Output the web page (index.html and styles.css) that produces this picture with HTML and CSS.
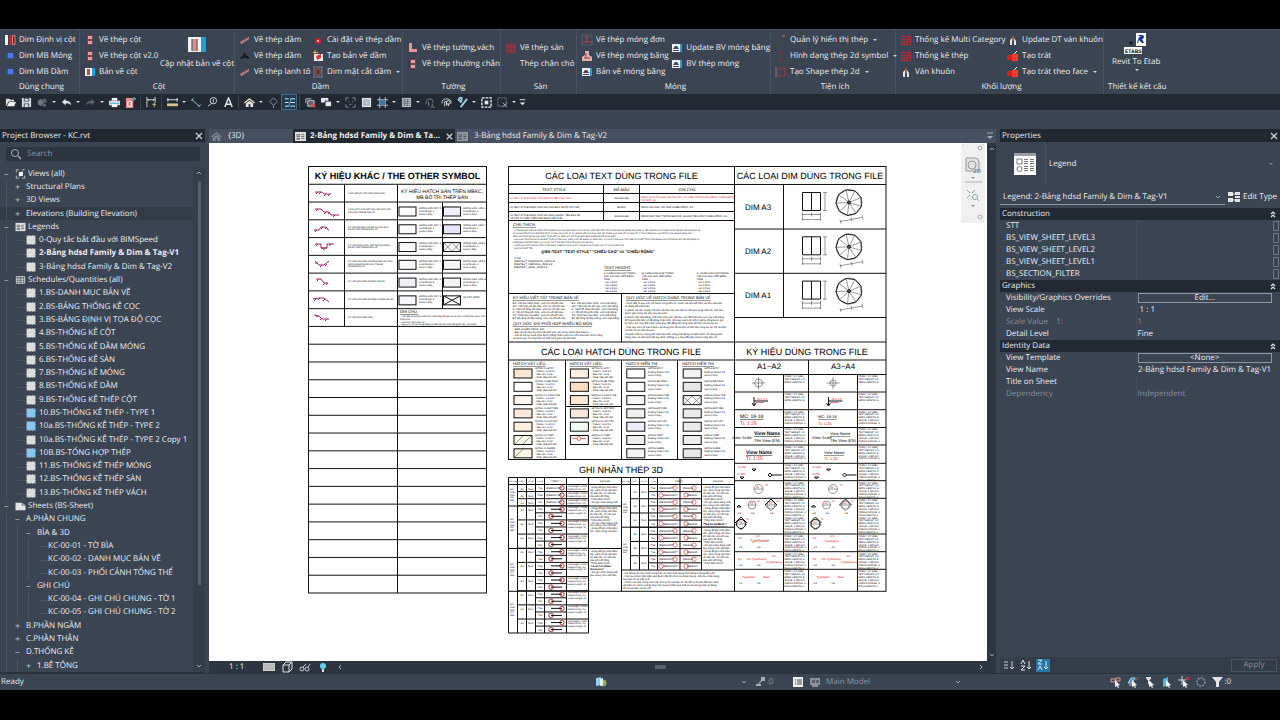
FILE: index.html
```html
<!DOCTYPE html>
<html lang="vi">
<head>
<meta charset="UTF-8">
<meta name="viewport" content="width=device-width, initial-scale=1.0">
<title>KC.rvt</title>
<link rel="stylesheet" href="styles.css">
</head>
<body>

<!-- icon sprite -->
<svg class="sprite" aria-hidden="true">
  <symbol id="i-axis" viewBox="0 0 12 12"><path d="M1 1h3v10H1z" fill="#eee"/><path d="M5.500 1h2v10h-2z" fill="#b33"/><path d="M8.500 1.500h2.500v9H8.500z" fill="#433" stroke="#e77"/></symbol>
  <symbol id="i-blue" viewBox="0 0 12 12"><path d="M2 3h8v6H2z" fill="#2b5599"/><path d="M4 3h5v5H4z" fill="#4a7be0"/></symbol>
  <symbol id="i-col" viewBox="0 0 12 12"><path d="M3 1h6v10H3z" fill="#6b4650"/><path d="M4 2h4v3H4zM4 7h4v3H4z" fill="#e8a0a0"/></symbol>
  <symbol id="i-sheet" viewBox="0 0 12 12"><path d="M1 2h7v8H1z" fill="#eee"/><path d="M3 3h3v6H3z" fill="#a55"/><path d="M8 2h3v8H8z" fill="#1ba1e2"/></symbol>
  <symbol id="i-bigcol" viewBox="0 0 18 18"><path d="M0 1h13v15H0z" fill="#f4f4f4"/><path d="M4 3v12M9 3v12M4 4h5M4 6h5M4 8h5M4 10h5M4 12h5M4 14h5" stroke="#844" stroke-width="1.200"/><path d="M13 1h5v15h-5z" fill="#1ba1e2"/></symbol>
  <symbol id="i-beam" viewBox="0 0 12 12"><path d="M1 8l9-5v2L2 10z" fill="#e8a0a0"/><path d="M1 9l9-5" stroke="#824" stroke-width=".600"/></symbol>
  <symbol id="i-dark" viewBox="0 0 12 12"><path d="M5 2l2 3 4 3-3 1-2-2-3 2-2-1 3-2z" fill="#15181d"/></symbol>
  <symbol id="i-gear" viewBox="0 0 12 12"><circle cx="6" cy="7" r="3" fill="#c22"/><circle cx="6" cy="7" r="1" fill="#fcc"/></symbol>
  <symbol id="i-new" viewBox="0 0 12 12"><path d="M2 4h9v7H2z" fill="#eee"/><path d="M4 6l5-2v4l-4 2z" fill="#d33"/><path d="M3 0v5M1 2.500h5" stroke="#f8b04a"/></symbol>
  <symbol id="i-section" viewBox="0 0 12 12"><path d="M1 1h10M1 11h10M2 1v10M10 1v10" stroke="#777f8c" fill="none"/><path d="M4 3h4v6H4z" fill="#533" stroke="#c55" stroke-width=".800"/></symbol>
  <symbol id="i-ell" viewBox="0 0 12 12"><path d="M2 1h3v6h5v3H2z" fill="#e89a98"/></symbol>
  <symbol id="i-grid" viewBox="0 0 12 12"><path d="M1 3h10M1 5h10M1 8h10M1 10h10M3 1v10M6 1v10M9 1v10" stroke="#a8323a"/></symbol>
  <symbol id="i-foot" viewBox="0 0 12 12"><path d="M1 1h10v10H1z" fill="none" stroke="#565f6e"/><path d="M2 8h8M6 3v5M4 3h4" stroke="#c0454a"/></symbol>
  <symbol id="i-ribft" viewBox="0 0 12 12"><path d="M4 1h4v4l3 2v4H1V7l3-2z" fill="#e8b0ac"/><path d="M3 8h6M5 3v5" stroke="#844"/></symbol>
  <symbol id="i-bv" viewBox="0 0 12 12"><path d="M1 2h8v8H1z" fill="#eee"/><path d="M2 7l2-3h2l2 3z" fill="#445"/><path d="M2 8.500h6" stroke="#445"/><path d="M9 2h2v8H9z" fill="#1ba1e2"/></symbol>
  <symbol id="i-pen" viewBox="0 0 12 12"><path d="M3 10l5-8" stroke="#5a4040"/><path d="M7 2h3" stroke="#c77"/></symbol>
  <symbol id="i-shape" viewBox="0 0 12 12"><path d="M6 1v3M6 5v2M6 8v3M4 2h4M4 10h4" stroke="#8a323a"/></symbol>
  <symbol id="i-stir" viewBox="0 0 12 12"><path d="M1 1v10" stroke="#7c8491"/><path d="M3 3h7v7H3zM4 1v2M9 1v2" fill="none" stroke="#a8323a"/></symbol>
  <symbol id="i-cal" viewBox="0 0 12 12"><path d="M1.500 2.500h9v8h-9zM1 5h10M4 5v5M7 5v5M1 8h10M3 1v2M9 1v2" fill="none" stroke="#b82a2a"/></symbol>
  <symbol id="i-form" viewBox="0 0 12 12"><path d="M6 1l2 6H4z" fill="#a56a43"/><path d="M3 6l2-2v7H3zM7 4l2 3v4H7z" fill="#e8e8e8"/></symbol>
  <symbol id="i-paint" viewBox="0 0 12 12"><path d="M0 5h6v5H0z" fill="#d32020"/><path d="M5 4h6v7H5z" fill="#ff3b28"/><path d="M7 4l3-3" stroke="#fff"/></symbol>
  <symbol id="i-etab" viewBox="0 0 24 22"><path d="M12 0h10v13H12z" fill="#fff"/><path d="M14 2h4q2 0 2 2t-2 2l2 4h-2l-3-3-1 3h-1l2-6h2z" fill="#10349c"/><circle cx="7" cy="10" r="1.500" fill="#111"/><path d="M0 14h18v7H0z" fill="#fff"/></symbol>

  <symbol id="q-open" viewBox="0 0 12 12"><path d="M1 10V2h4l1 1h4v2H4z" fill="#d9dce1"/><path d="M4.500 5.500H12L10 10H2z" fill="#f1f1f1"/></symbol>
  <symbol id="q-save" viewBox="0 0 12 12"><path d="M1 1h10v10H1z" fill="#d9dce1"/><path d="M3 1h6v4H3zM3 7h6v4H3z" fill="#39414d"/><path d="M4 8h4v3H4zM4 2h4v2H4z" fill="#d9dce1"/></symbol>
  <symbol id="q-sync" viewBox="0 0 12 12"><path d="M1 4l3-2 3 2v4l-3 2-3-2z" fill="#6b7380"/><circle cx="8" cy="4" r="2.500" fill="#596170"/><circle cx="8" cy="9" r="2" fill="#596170"/></symbol>
  <symbol id="q-undo" viewBox="0 0 12 12"><path d="M5 2L1 5.500 5 9V7q4-1 6 2 0-5-6-5z" fill="#e8e8e8"/></symbol>
  <symbol id="q-redo" viewBox="0 0 12 12"><path d="M7 2l4 3.500L7 9V7Q3 6 1 9q0-5 6-5z" fill="#596170"/></symbol>
  <symbol id="q-print" viewBox="0 0 12 12"><path d="M3 1h6v3H3z" fill="#fff"/><path d="M0 4h12v5H0z" fill="#d4d8dd"/><path d="M3 8h6v3H3z" fill="#fff"/><path d="M1 7h10" stroke="#3cb7ea"/></symbol>
  <symbol id="q-pdf" viewBox="0 0 12 12"><path d="M1 1h8v11H1z" fill="#e98a8a"/><path d="M3 5h4v5H3z" fill="none" stroke="#fff"/><path d="M7 2h4M9 0l3 2-3 2" stroke="#4ab8ea" fill="none"/></symbol>
  <symbol id="q-dim" viewBox="0 0 12 12"><path d="M1 0v11M10 0v6M1 3h9M3 2v2M8 2v2" stroke="#d9dce1" fill="none"/><path d="M9 6v5M7 8h4" stroke="#e8c05a"/></symbol>
  <symbol id="q-meas" viewBox="0 0 12 12"><path d="M0 3h12M1 1v4M11 1v4" stroke="#e8e8e8"/><path d="M0 7h12v3H0z" fill="#d8c48c"/></symbol>
  <symbol id="q-align" viewBox="0 0 12 12"><path d="M1 3l8 7M0 4l3-3M8 11l3-3" stroke="#a9d3ec" fill="none"/></symbol>
  <symbol id="q-tag" viewBox="0 0 12 12"><circle cx="7" cy="4" r="3.500" fill="none" stroke="#d9dce1"/><path d="M7 2v4M5 7l-4 3" stroke="#d9dce1"/></symbol>
  <symbol id="q-text" viewBox="0 0 12 12"><path d="M2 11L6 1l4 10M3.500 8h5" fill="none" stroke="#e8e8e8" stroke-width="1.600"/></symbol>
  <symbol id="q-home" viewBox="0 0 12 12"><path d="M0 6l6-5 6 5-1 1-5-4-5 4zM2 7l4-3 4 3v4H7V8H5v3H2z" fill="#e3e0d4"/></symbol>
  <symbol id="q-ghome" viewBox="0 0 12 12"><path d="M0 6l6-5 6 5-1 1-5-4-5 4zM2 7l4-3 4 3v4H7V8H5v3H2z" fill="#7e8694"/></symbol>
  <symbol id="q-sect" viewBox="0 0 12 12"><path d="M6 1l4 4-4 4-4-4zM6 9v3" fill="none" stroke="#8b93a0"/></symbol>
  <symbol id="q-thin" viewBox="0 0 12 12"><path d="M1 2h4M1 6h4M1 10h4M7 2h5M7 6h5M7 10h5" stroke="#e8f4fb"/><path d="M8 1l-3 10" stroke="#4ab8ea"/></symbol>
  <symbol id="q-close" viewBox="0 0 12 12"><path d="M1 2h6M1 2v5M3 4h7v6H3z" fill="#59616e" stroke="#c9cdd3"/><path d="M7 7l4 4M11 7l-4 4" stroke="#e04848" stroke-width="1.500"/></symbol>
  <symbol id="q-win" viewBox="0 0 12 12"><path d="M0 1h8v5H0z" fill="#e8e8e8"/><path d="M4 4h8v7H4z" fill="#222933"/><path d="M5 5h6v5H5z" fill="#e8e8e8"/></symbol>
  <symbol id="q-mark" viewBox="0 0 12 12"><path d="M1 4V1h3M8 1h3v3M11 8v3H8M4 11H1V8M3 5h1M8 5h1M5 8h2" fill="none" stroke="#8b93a0"/></symbol>
  <symbol id="q-page" viewBox="0 0 12 12"><path d="M1 1h10v10H1z" fill="#dbe4ea"/><path d="M3 3h6v6H3z" fill="#b5c3cd" stroke="#788593" stroke-dasharray="1 1"/></symbol>
  <symbol id="q-crop" viewBox="0 0 12 12"><path d="M3 0v12M9 0v12M0 3h12M0 9h12" stroke="#c9cdd3"/><path d="M3 3h6v6H3z" fill="#3e76a3"/></symbol>
  <symbol id="q-hatch" viewBox="0 0 12 12"><path d="M1 1h10v10H1z" fill="#b8bcc2"/><path d="M2 3h8M2 5h8M2 7h8M2 9h8M4 2v8M7 2v8" stroke="#5a616c" stroke-width=".700"/></symbol>
  <symbol id="q-joina" viewBox="0 0 12 12"><path d="M1 8q0-6 4-6t4 4M4 10V5M8 7v3M6 11h5" fill="none" stroke="#7a828f"/></symbol>
  <symbol id="q-joinb" viewBox="0 0 12 12"><path d="M1 7q0-5 5-5t5 5M4 10V5h2v4M8 10V7" fill="none" stroke="#dfe2e6"/><circle cx="8" cy="6" r="2" fill="none" stroke="#dfe2e6"/></symbol>
  <symbol id="q-brush" viewBox="0 0 12 12"><path d="M1 2l4 4M2 1h3v3M4 11l7-9" stroke="#9fd0ea" stroke-width="2" fill="none"/></symbol>
  <symbol id="q-sel" viewBox="0 0 12 12"><path d="M1 1h10v10H1z" fill="none" stroke="#e8e8e8" stroke-dasharray="3 1" stroke-width="1.500"/><path d="M4 4h4v4H4z" fill="#e8e8e8"/></symbol>
  <symbol id="q-desel" viewBox="0 0 12 12"><path d="M1 1h9v9H1z" fill="none" stroke="#828a96" stroke-dasharray="2 1"/><path d="M6 6l5 5M11 6l-5 5" stroke="#a4abb6"/></symbol>
  <symbol id="q-more" viewBox="0 0 12 12"><path d="M3 3h6" stroke="#e8e8e8"/><path d="M3 6h6L6 9z" fill="#e8e8e8"/></symbol>

  <symbol id="p-views" viewBox="0 0 12 12"><path d="M1 4V1h3M8 1h3M1 8v3h3M8 11h3V8" fill="none" stroke="#cfd3d9"/><path d="M4 4l5-1v5l-5 1z" fill="#f1f1f1"/></symbol>
  <symbol id="p-legend" viewBox="0 0 12 12"><path d="M0 1h12v10H0z" fill="#dcdcdc"/><path d="M2 4h3v2H2zM2 8h3v1H2zM7 4h3M7 6h3M7 8h3" fill="none" stroke="#666"/></symbol>
  <symbol id="p-sched" viewBox="0 0 12 12"><path d="M1 2h10v8H1zM1 5h10M1 7.500h10M4 2v8M8 2v8" fill="none" stroke="#e4e4e4"/></symbol>
  <symbol id="p-sheet" viewBox="0 0 12 12"><path d="M0 2h8l4 3v6H0z" fill="#e4e4e4"/><path d="M8 2v3h4" fill="none" stroke="#555"/></symbol>
  <symbol id="p-search" viewBox="0 0 12 12"><circle cx="5" cy="5" r="3.500" fill="none" stroke="#aab0ba"/><path d="M8 8l3 3" stroke="#aab0ba" stroke-width="1.400"/></symbol>
  <symbol id="p-up" viewBox="0 0 12 12"><path d="M4 7l2-2 2 2" fill="none" stroke="#a4abb6"/></symbol>
  <symbol id="p-down" viewBox="0 0 12 12"><path d="M4 5l2 2 2-2" fill="none" stroke="#a4abb6"/></symbol>
  <symbol id="p-left" viewBox="0 0 12 12"><path d="M6 4L4 6l2 2" fill="none" stroke="#a4abb6"/></symbol>
  <symbol id="p-right" viewBox="0 0 12 12"><path d="M6 4l2 2-2 2" fill="none" stroke="#a4abb6"/></symbol>
  <symbol id="p-x" viewBox="0 0 12 12"><path d="M3 3l6 6M9 3l-6 6" stroke="#d4d7dc" stroke-width="1.200"/></symbol>
  <symbol id="p-big" viewBox="0 0 22 22"><path d="M0 0h22v3H0z" fill="#9a9da3"/><path d="M0 3h22v19H0z" fill="#fff"/><path d="M3 6h5v5H3zM10 6.500h4M10 8.500h4M10 10.500h4M16 6.500h4M16 8.500h4M16 10.500h4M10 13.500h4M10 15.500h4M10 17.500h4M16 13.500h4M16 15.500h4M16 17.500h4" fill="none" stroke="#777"/><circle cx="5.500" cy="16" r="2.500" fill="none" stroke="#777"/></symbol>
  <symbol id="p-edit" viewBox="0 0 12 12"><path d="M0 1h5v4H0zM0 7h5v4H0zM7 1h5v3H7zM7 5h5v2H7zM7 8h5v3H7z" fill="#e4e4e4"/><path d="M5 3h2M5 9h2" stroke="#e4e4e4"/></symbol>
  <symbol id="p-fold" viewBox="0 0 12 12"><path d="M4 6l2-2 2 2M4 9l2-2 2 2" fill="none" stroke="#e4e4e4" stroke-width="1.200"/></symbol>
  <symbol id="p-sort" viewBox="0 0 12 12"><path d="M1 3h4M1 6h4M1 9h4M9 2v8M7 8l2 2 2-2" fill="none" stroke="#c9cdd3"/></symbol>
  <symbol id="p-az" viewBox="0 0 12 12"><path d="M1 5l2-4 2 4M1 7h4L1 11h4M9 2v8M7 8l2 2 2-2" fill="none" stroke="#dfe5ea"/></symbol>
  <symbol id="p-za" viewBox="0 0 12 12"><path d="M1 1h4L1 5h4M1 11l2-4 2 4M9 2v8M7 8l2 2 2-2" fill="none" stroke="#dfe5ea"/></symbol>

  <symbol id="v-detail" viewBox="0 0 12 12"><path d="M0 2h12v8H0z" fill="#e0e0e0"/><path d="M0 4h12M0 6h12M0 8h12M2 2v8M4 2v8M6 2v8M8 2v8M10 2v8" stroke="#888" stroke-width=".500"/></symbol>
  <symbol id="v-cube" viewBox="0 0 12 12"><path d="M2 4h6v7H2zM2 4l3-3h6v7l-3 3M8 4l3-3" fill="none" stroke="#e4e4e4"/></symbol>
  <symbol id="v-crop" viewBox="0 0 12 12"><circle cx="3" cy="8" r="2" fill="none" stroke="#c9cdd3"/><circle cx="8" cy="8" r="2" fill="none" stroke="#c9cdd3"/><path d="M4 6l3-3M9 6l2-3" stroke="#c9cdd3"/></symbol>
  <symbol id="v-bulb" viewBox="0 0 12 12"><circle cx="6" cy="5" r="3" fill="#5fd4f0"/><path d="M5 8h2v3H5z" fill="#e4e4e4"/></symbol>
  <symbol id="s-globe" viewBox="0 0 12 12"><path d="M1 2l5-1v8l-5 1z" fill="#8fd3f0"/><circle cx="8" cy="7" r="3.500" fill="#7fb85a"/><path d="M5 3l3-1v7l-3 1z" fill="#e8f2f7"/><path d="M9 5l2 3" stroke="#e0a040"/></symbol>
  <symbol id="s-rel" viewBox="0 0 12 12"><path d="M1 10h5V8H4l3-3h3V1H6v3L3 8H1z" fill="#a9afb9"/></symbol>
  <symbol id="s-list" viewBox="0 0 12 12"><path d="M1 1h10v10H1z" fill="#f1f1f1"/><path d="M3 4h1M5 4h5M3 6h1M5 6h5M3 8h1M5 8h5" stroke="#444"/></symbol>
  <symbol id="s-opt" viewBox="0 0 12 12"><path d="M1 2h10v7H1zM3 9v2h6V9" fill="#8a919d"/><path d="M3 4h3v3H3zM7 4h3v3H7z" fill="#5a6270"/></symbol>
  <symbol id="s-link" viewBox="0 0 12 12"><path d="M1 3h4v3H1zM6 2h4v3H6z" fill="none" stroke="#e09a9a"/><path d="M5 4l5 5-2 .500 1 2-1 .500-1-2-2 1z" fill="#f1f1f1"/></symbol>
  <symbol id="s-under" viewBox="0 0 12 12"><path d="M1 7l3-5h4L5 7zM2 9h3" fill="#4a9ad4" stroke="#9fd0ea"/><path d="M8 1l3 3M11 1L8 4" stroke="#e04848"/><path d="M5 4l5 5-2 .500 1 2-1 .500-1-2-2 1z" fill="#f1f1f1"/></symbol>
  <symbol id="s-pin" viewBox="0 0 12 12"><path d="M2 1h5v1L6 4H3L2 2z" fill="#e4e4e4"/><path d="M4.500 4v4" stroke="#e4e4e4"/><path d="M5 4l5 5-2 .500 1 2-1 .500-1-2-2 1z" fill="#f1f1f1"/></symbol>
  <symbol id="s-face" viewBox="0 0 12 12"><path d="M2 3l5-2v8l-5 2z" fill="#4ab8ea"/><path d="M5 4l5 5-2 .500 1 2-1 .500-1-2-2 1z" fill="#f1f1f1"/></symbol>
  <symbol id="s-drag" viewBox="0 0 12 12"><path d="M4 0v9M0 4h8" stroke="#d4d7dc"/><path d="M8 1l3 3M11 1L8 4" stroke="#e04848"/><path d="M5 4l5 5-2 .500 1 2-1 .500-1-2-2 1z" fill="#f1f1f1"/></symbol>
  <symbol id="s-spin" viewBox="0 0 12 12"><circle cx="6" cy="6" r="4" fill="none" stroke="#8b93a0" stroke-width="1.500" stroke-dasharray="2 1"/></symbol>
  <symbol id="s-filter" viewBox="0 0 12 12"><path d="M0 1h11L7 6v5H4V6z" fill="#e4e4e4"/></symbol>
</svg>

<header class="ribbon">
  <section class="panel w-80">
    <div class="cols">
      <div class="col">
        <button><svg><use href="#i-axis"/></svg>Dim Định vị cột</button>
        <button><svg><use href="#i-blue"/></svg>Dim MB Móng</button>
        <button><svg><use href="#i-blue"/></svg>Dim MB Dầm</button>
      </div>
    </div>
    <h2>Dùng chung</h2>
  </section>
  <section class="panel w-155">
    <div class="cols">
      <div class="col w-76">
        <button><svg><use href="#i-col"/></svg>Vẽ thép cột</button>
        <button><svg><use href="#i-col"/></svg>Vẽ thép cột v2.0</button>
        <button><svg><use href="#i-sheet"/></svg>Bản vẽ cột</button>
      </div>
      <div class="col">
        <button class="big"><svg><use href="#i-bigcol"/></svg>Cập nhật bản vẽ cột</button>
      </div>
    </div>
    <h2>Cột</h2>
  </section>
  <section class="panel w-168">
    <div class="cols">
      <div class="col w-73">
        <button><svg><use href="#i-beam"/></svg>Vẽ thép dầm</button>
        <button><svg><use href="#i-dark"/></svg>Vẽ thép dầm</button>
        <button><svg><use href="#i-beam"/></svg>Vẽ thép lanh tô</button>
      </div>
      <div class="col">
        <button><svg><use href="#i-gear"/></svg>Cài đặt vẽ thép dầm</button>
        <button><svg><use href="#i-new"/></svg>Tạo bản vẽ dầm</button>
        <button><svg><use href="#i-section"/></svg>Dim mặt cắt dầm<i class="caret"></i></button>
      </div>
    </div>
    <h2>Dầm</h2>
  </section>
  <section class="panel w-98">
    <div class="cols">
      <div class="col">
        <button><svg><use href="#i-ell"/></svg>Vẽ thép tường,vách</button>
        <button><svg><use href="#i-col"/></svg>Vẽ thép thường chắn</button>
      </div>
    </div>
    <h2>Tường</h2>
  </section>
  <section class="panel w-76">
    <div class="cols">
      <div class="col">
        <button><svg><use href="#i-grid"/></svg>Vẽ thép sàn</button>
        <button><svg></svg>Thép chân chó</button>
      </div>
    </div>
    <h2>Sàn</h2>
  </section>
  <section class="panel w-194">
    <div class="cols">
      <div class="col w-91">
        <button><svg><use href="#i-foot"/></svg>Vẽ thép móng đơn</button>
        <button><svg><use href="#i-ribft"/></svg>Vẽ thép móng băng</button>
        <button><svg><use href="#i-bv"/></svg>Bản vẽ móng băng</button>
      </div>
      <div class="col">
        <button><svg><use href="#i-bv"/></svg>Update BV móng băng</button>
        <button><svg><use href="#i-bv"/></svg>BV thép móng</button>
      </div>
    </div>
    <h2>Móng</h2>
  </section>
  <section class="panel w-125">
    <div class="cols">
      <div class="col">
        <button><svg><use href="#i-pen"/></svg>Quản lý hiển thị thép<i class="caret"></i></button>
        <button><svg><use href="#i-shape"/></svg>Hình dạng thép 2d symbol<i class="caret"></i></button>
        <button><svg><use href="#i-stir"/></svg>Tạo Shape thép 2d<i class="caret"></i></button>
      </div>
    </div>
    <h2>Tiện ích</h2>
  </section>
  <section class="panel w-208">
    <div class="cols">
      <div class="col w-108">
        <button><svg><use href="#i-cal"/></svg>Thống kê Multi Category</button>
        <button><svg><use href="#i-cal"/></svg>Thống kê thép</button>
        <button><svg><use href="#i-form"/></svg>Ván khuôn</button>
      </div>
      <div class="col">
        <button><svg><use href="#i-form"/></svg>Update DT ván khuôn</button>
        <button><svg><use href="#i-paint"/></svg>Tạo trát</button>
        <button><svg><use href="#i-paint"/></svg>Tạo trát theo face<i class="caret"></i></button>
      </div>
    </div>
    <h2>Khối lượng</h2>
  </section>
  <section class="panel last">
    <div class="cols">
      <div class="col">
        <button class="big etab"><svg viewBox="0 0 24 22"><use href="#i-etab"/><text x="1" y="20" class="etabs">ETABS</text></svg>Revit To Etab<i class="caret"></i></button>
      </div>
    </div>
    <h2>Thiết kế kết cấu</h2>
  </section>
</header>

<nav class="quick">
  <button aria-label="Open"><svg><use href="#q-open"/></svg></button>
  <button aria-label="Save"><svg><use href="#q-save"/></svg></button>
  <button aria-label="Sync"><svg><use href="#q-sync"/></svg></button>
  <i class="caret"></i>
  <button aria-label="Undo"><svg><use href="#q-undo"/></svg></button>
  <i class="caret"></i>
  <button aria-label="Redo"><svg><use href="#q-redo"/></svg></button>
  <i class="caret"></i>
  <button aria-label="Print"><svg><use href="#q-print"/></svg></button>
  <button aria-label="Export PDF"><svg><use href="#q-pdf"/></svg></button>
  <i class="sep"></i>
  <button aria-label="Dimension"><svg><use href="#q-dim"/></svg></button>
  <i class="sep"></i>
  <button aria-label="Measure"><svg><use href="#q-meas"/></svg></button>
  <i class="caret"></i>
  <button aria-label="Aligned"><svg><use href="#q-align"/></svg></button>
  <button aria-label="Tag"><svg><use href="#q-tag"/></svg></button>
  <button aria-label="Text"><svg><use href="#q-text"/></svg></button>
  <i class="sep"></i>
  <button aria-label="3D view"><svg><use href="#q-home"/></svg></button>
  <i class="caret"></i>
  <button aria-label="Section"><svg><use href="#q-sect"/></svg></button>
  <button class="on" aria-label="Thin lines"><svg><use href="#q-thin"/></svg></button>
  <i class="sep"></i>
  <button aria-label="Close inactive"><svg><use href="#q-close"/></svg></button>
  <button aria-label="Switch windows"><svg><use href="#q-win"/></svg></button>
  <i class="caret"></i>
  <button aria-label="Marks"><svg><use href="#q-mark"/></svg></button>
  <button aria-label="Page"><svg><use href="#q-page"/></svg></button>
  <button aria-label="Crop"><svg><use href="#q-crop"/></svg></button>
  <i class="caret"></i>
  <button aria-label="Hatch"><svg><use href="#q-hatch"/></svg></button>
  <i class="caret"></i>
  <button aria-label="Unjoin"><svg><use href="#q-joina"/></svg></button>
  <button aria-label="Join"><svg><use href="#q-joinb"/></svg></button>
  <button aria-label="Match type"><svg><use href="#q-brush"/></svg></button>
  <i class="caret"></i>
  <button aria-label="Select box"><svg><use href="#q-sel"/></svg></button>
  <button aria-label="Hide"><svg><use href="#q-desel"/></svg></button>
  <i class="caret"></i>
  <button class="more" aria-label="Customize"><svg><use href="#q-more"/></svg></button>
</nav>

<main class="work">
  <aside class="browser">
    <div class="title">Project Browser - KC.rvt<button aria-label="Close"><svg><use href="#p-x"/></svg></button></div>
    <div class="search">
      <svg><use href="#p-search"/></svg>
      <input type="text" placeholder="Search" aria-label="Search">
    </div>
    <div class="tree-wrap">
      <ul class="tree" id="tree"></ul>
      <div class="vbar">
        <svg><use href="#p-up"/></svg>
        <div class="track"><div class="thumb"></div></div>
        <svg><use href="#p-down"/></svg>
      </div>
    </div>
  </aside>

  <section class="view">
    <div class="tabs">
      <button class="tab home"><svg><use href="#q-ghome"/></svg>{3D}</button>
      <button class="tab active"><svg><use href="#p-legend"/></svg><span>2-Bảng hdsd Family &amp; Dim &amp; Ta...</span><svg><use href="#p-x"/></svg></button>
      <button class="tab dim"><svg><use href="#p-legend"/></svg>3-Bảng hdsd Family &amp; Dim &amp; Tag-V2</button>
      <svg class="tabs-more"><use href="#q-more"/></svg>
    </div>
    <div class="sheet-wrap">
      <div class="sheet">
        <svg id="drawing" viewBox="209 143 778 518"></svg>
        <div class="navbar">
          <svg viewBox="0 0 22 77">
            <g fill="none" stroke="#aaa"><circle cx="18" cy="4" r="2"/><circle cx="18" cy="73" r="2"/><path d="M3 38h17"/></g>
            <path d="M4 14h9q4 0 4 4v9H4z" fill="#e3e3e3" stroke="#999"/>
            <circle cx="10" cy="21" r="4" fill="none" stroke="#999"/>
            <path d="M5 46l3 3M13 46l-3 3M5 54l3-3" stroke="#999"/><circle cx="13" cy="53" r="2.500" fill="none" stroke="#8aa"/><path d="M15 55l2 2" stroke="#8aa"/>
            <path d="M9 33h4l-2 2zM9 61h4l-2 2z" fill="#888"/>
            <text x="11" y="29" class="nav2d">2D</text>
          </svg>
        </div>
      </div>
      <div class="vbar">
        <svg><use href="#p-up"/></svg>
        <div class="track"></div>
        <svg><use href="#p-down"/></svg>
      </div>
    </div>
    <div class="viewbar">
      <span class="scale">1 : 1</span>
      <svg><use href="#v-detail"/></svg>
      <svg><use href="#v-cube"/></svg>
      <svg><use href="#v-crop"/></svg>
      <svg><use href="#v-bulb"/></svg>
      <div class="hbar"><svg><use href="#p-left"/></svg><div class="hthumb"></div><svg><use href="#p-right"/></svg></div>
    </div>
  </section>

  <aside class="props">
    <div class="title">Properties<button aria-label="Close"><svg><use href="#p-x"/></svg></button></div>
    <div class="type">
      <div class="thumbnail"><svg><use href="#p-big"/></svg></div>
      <span>Legend</span>
      <i class="caret"></i>
    </div>
    <div class="instance">
      <select aria-label="Instance"><option>Legend: 2-Bảng hdsd Family &amp; Dim &amp; Tag-V1</option></select>
      <svg class="chev"><use href="#p-down"/></svg>
      <button><svg><use href="#p-edit"/></svg>Edit Type</button>
    </div>
    <table>
      <colgroup><col class="c-name"><col><col class="c-end"></colgroup>
      <tbody>
        <tr class="group"><th colspan="2">Construction</th><td><svg><use href="#p-fold"/></svg></td></tr>
        <tr><th>STT</th><td></td><td><button class="tick" aria-label="Associate STT"></button></td></tr>
        <tr><th>BS_VIEW_SHEET_LEVEL3</th><td></td><td><button class="tick" aria-label="Associate level 3"></button></td></tr>
        <tr><th>BS_VIEW_SHEET_LEVEL2</th><td></td><td><button class="tick" aria-label="Associate level 2"></button></td></tr>
        <tr><th>BS_VIEW_SHEET_LEVEL1</th><td></td><td><button class="tick" aria-label="Associate level 1"></button></td></tr>
        <tr><th>BS_SECTION_FILTER</th><td></td><td><button class="tick" aria-label="Associate filter"></button></td></tr>
        <tr class="group"><th colspan="2">Graphics</th><td><svg><use href="#p-fold"/></svg></td></tr>
        <tr><th>Visibility/Graphics Overrides</th><td><button class="wide">Edit...</button></td><td></td></tr>
        <tr><th>View Scale</th><td>&nbsp;1 : 1</td><td></td></tr>
        <tr class="off"><th>Scale Value &nbsp;&nbsp; 1:</th><td>1</td><td></td></tr>
        <tr><th>Detail Level</th><td>Fine</td><td></td></tr>
        <tr class="group"><th colspan="2">Identity Data</th><td><svg><use href="#p-fold"/></svg></td></tr>
        <tr><th>View Template</th><td><button class="wide">&lt;None&gt;</button></td><td></td></tr>
        <tr><th><label for="viewName">View Name</label></th><td colspan="2"><input id="viewName" type="text" value="2-Bảng hdsd Family &amp; Dim &amp; Tag-V1"></td></tr>
        <tr><th>Title on Sheet</th><td></td><td></td></tr>
        <tr class="off"><th>Dependency</th><td>Independent</td><td></td></tr>
      </tbody>
    </table>
    <div class="props-foot">
      <button aria-label="Sort"><svg><use href="#p-sort"/></svg></button>
      <button aria-label="Ascending"><svg><use href="#p-az"/></svg></button>
      <button class="on" aria-label="Descending"><svg><use href="#p-za"/></svg></button>
      <button class="apply" disabled>Apply</button>
    </div>
  </aside>
</main>

<footer class="status">
  <span class="ready">Ready</span>
  <svg class="globe"><use href="#s-globe"/></svg>
  <svg><use href="#p-down"/></svg>
  <svg><use href="#s-rel"/></svg><span class="zero">:0</span>
  <svg><use href="#s-list"/></svg>
  <svg><use href="#s-opt"/></svg>
  <span class="model">Main Model</span>
  <svg><use href="#p-down"/></svg>
  <div class="picks">
    <svg><use href="#s-link"/></svg>
    <svg><use href="#s-under"/></svg>
    <svg><use href="#s-pin"/></svg>
    <svg><use href="#s-face"/></svg>
    <svg><use href="#s-drag"/></svg>
    <svg><use href="#s-spin"/></svg>
    <svg><use href="#s-filter"/></svg><span>:0</span>
  </div>
</footer>

<script src="script.js"></script>
</body>
</html>
```

FILE: styles.css
```css
* {
  box-sizing: border-box;
}
body {
  display: flex;
  flex-direction: column;
  height: 100vh;
  margin: 0;
  padding: 29px 0 30px;
  overflow: hidden;
  background: #000;
  color: #eceef0;
  font: 8px/12px "Open Sans", "Noto Sans", sans-serif;
  text-rendering: geometricPrecision;
}
button, input, select {
  margin: 0;
  padding: 0;
  border: 0;
  background: none;
  color: inherit;
  font: inherit;
  text-rendering: inherit;
  outline: none;
}
svg {
  flex: none;
  width: 12px;
  height: 12px;
}
.sprite {
  position: absolute;
  width: 0;
  height: 0;
}
.caret {
  flex: none;
  border: 2px solid transparent;
  border-top-color: #d4d7dc;
  border-bottom: 0;
}

/* ribbon */
.ribbon {
  display: flex;
  height: 65px;
  background: #3b4453;
  border-top: 1px solid #465062;
}
.panel {
  display: flex;
  flex-direction: column;
  padding-left: 4px;
  border-right: 1px solid #4a5363;
}
.panel.last {
  border: 0;
}
.panel h2 {
  margin: 0;
  font-size: 8px;
  font-weight: 400;
  line-height: 14px;
  text-align: center;
}
.cols {
  display: flex;
  height: 50px;
  padding-top: 2px;
}
.col {
  display: flex;
  flex-direction: column;
  justify-content: center;
}
.col button {
  display: flex;
  align-items: center;
  gap: 3px;
  height: 16px;
  white-space: nowrap;
}
.col .caret {
  margin-left: 2px;
}
.col .big {
  flex-direction: column;
  height: 48px;
  padding-top: 4px;
  gap: 4px;
}
.big svg {
  width: 18px;
  height: 18px;
}
.col .etab {
  padding: 1px 0 0 4px;
  gap: 1px;
}
.etab svg {
  width: 24px;
  height: 22px;
}
.etabs {
  font: bold 5px "Liberation Sans", sans-serif;
}
.w-73 { width: 73px; }
.w-76 { width: 76px; }
.w-80 { width: 80px; }
.w-91 { width: 91px; }
.w-98 { width: 98px; }
.w-108 { width: 108px; }
.w-125 { width: 125px; }
.w-155 { width: 155px; }
.w-168 { width: 168px; }
.w-194 { width: 194px; }
.w-208 { width: 208px; }

/* quick access bar */
.quick {
  display: flex;
  align-items: center;
  height: 16px;
  padding-left: 2px;
  background: #222933;
}
.quick button {
  display: flex;
  align-items: center;
  justify-content: center;
  width: 16px;
  height: 16px;
}
.quick .on {
  background: #243c4e;
  border: 1px solid #3d6b8a;
}
.quick svg {
  width: 11px;
  height: 11px;
}
.quick .caret {
  margin: 0 2px;
}
.quick .more {
  width: 8px;
}
.sep {
  width: 1px;
  height: 14px;
  margin: 0 2px;
  background: #3b4453;
}

/* work area */
.work {
  display: flex;
  flex: 1;
  gap: 4px;
  min-height: 0;
  padding-top: 19px;
  background: #3b4453;
}
.title {
  display: flex;
  align-items: center;
  justify-content: space-between;
  height: 13px;
  padding-left: 2px;
  background: #212830;
}
.title button {
  display: flex;
}
.browser {
  display: flex;
  flex-direction: column;
  width: 205px;
}
.search {
  display: flex;
  align-items: center;
  gap: 5px;
  height: 14px;
  margin: 5px 5px 6px 6px;
  padding-left: 4px;
  background: #2d3541;
}
.search input {
  flex: 1;
}
.search input::placeholder {
  color: #8d95a1;
}
.tree-wrap {
  display: flex;
  flex: 1;
  min-height: 0;
  border-bottom: 1px solid #2b323d;
}
.tree {
  display: flex;
  flex: 1;
  flex-direction: column;
  margin: 0;
  padding: 0 0 0 4px;
  list-style: none;
  white-space: nowrap;
}
.tree li {
  display: flex;
  flex: 1;
  align-items: center;
  min-height: 0;
}
.tree .sel {
  margin-left: -4px;
  padding-left: 4px;
  background: #333b48;
}
.tree .bold {
  font-weight: 700;
}
.tree svg {
  width: 11px;
  height: 10px;
  margin-right: 2px;
}
.guide {
  align-self: stretch;
  width: 11px;
  background: linear-gradient(#596272, #596272) 2px 0 / 1px 100% no-repeat;
  opacity: .5;
}
.guide.end {
  background: linear-gradient(#596272, #596272) 2px 7px / 9px 1px no-repeat;
}
.toggle {
  width: 11px;
  color: #b9bfc8;
  font-size: 9px;
}
.page {
  width: 10px;
  height: 10px;
  margin-right: 3px;
  border: 1px dashed #6b7380;
  background: #dcdcdc;
}
.page.blue {
  background: #83c7f5;
}
.vbar {
  display: flex;
  flex-direction: column;
  align-items: center;
  width: 12px;
  background: #363e4c;
}
.track {
  flex: 1;
}
.thumb {
  width: 3px;
  height: 84%;
  margin-top: 2px;
  background: #566071;
}

/* drawing view */
.view {
  display: flex;
  flex: 1;
  flex-direction: column;
  min-width: 0;
}
.tabs {
  display: flex;
  align-items: center;
  height: 14px;
  background: #474f63;
}
.tab {
  display: flex;
  align-items: center;
  gap: 4px;
  height: 14px;
  padding: 0 2px;
  white-space: nowrap;
}
.tab svg {
  width: 11px;
  height: 11px;
}
.tab.home {
  width: 84px;
  gap: 6px;
}
.tab.active {
  width: 162px;
  background: #212830;
  font-weight: 700;
}
.tab.active span {
  flex: 1;
  text-align: left;
}
.tab.dim {
  gap: 6px;
}
.tab.dim svg {
  opacity: .5;
}
.tabs-more {
  margin-left: auto;
  opacity: .6;
}
.sheet-wrap {
  display: flex;
  flex: 1;
  min-height: 0;
}
.sheet {
  position: relative;
  flex: 1;
  background: #fff;
}
#drawing {
  display: block;
  width: 100%;
  height: 100%;
  font-family: "Liberation Sans", Arial, sans-serif;
}
.navbar {
  position: absolute;
  top: 1px;
  right: 3px;
  width: 22px;
  height: 78px;
  border-radius: 2px;
  background: #f0f0f0;
  box-shadow: 0 0 1px #777;
}
.navbar svg {
  width: 22px;
  height: 77px;
}
.nav2d {
  font: bold 6px "Open Sans", sans-serif;
  fill: #7b95b8;
}
.view .vbar {
  width: 9px;
  background: #2d3541;
}
.viewbar {
  display: flex;
  align-items: center;
  gap: 6px;
  height: 12px;
  background: #2d3541;
}
.scale {
  width: 48px;
  padding-left: 20px;
}
.hbar {
  display: flex;
  flex: 1;
  align-items: center;
  justify-content: space-between;
  padding-right: 10px;
}
.hthumb {
  width: 11px;
  height: 4px;
  background: #566071;
}

/* properties */
.props {
  display: flex;
  flex-direction: column;
  width: 280px;
}
.type {
  display: flex;
  align-items: center;
  height: 44px;
  padding-right: 7px;
}
.thumbnail {
  width: 46px;
  height: 42px;
  padding: 10px 14px;
  border-right: 1px solid #4a5363;
}
.thumbnail svg {
  width: 22px;
  height: 22px;
}
.type span {
  flex: 1;
  padding-left: 3px;
}
.type .caret {
  border-top-color: #7a828f;
}
.instance {
  display: flex;
  align-items: center;
  height: 22px;
}
.instance select {
  flex: 1;
  height: 16px;
  padding-left: 3px;
  border-bottom: 1px solid #8d95a1;
  appearance: none;
}
.chev {
  margin-left: -13px;
}
.instance button {
  display: flex;
  align-items: center;
  gap: 3px;
  width: 56px;
  padding-left: 4px;
}
.props table {
  width: 100%;
  border-collapse: collapse;
  table-layout: fixed;
}
.c-name {
  width: 136px;
}
.c-end {
  width: 8px;
}
.props tr {
  height: 12px;
}
.props th, .props td {
  height: 12px;
  padding: 0 0 0 1px;
  border-left: 1px solid #424b5b;
  font-weight: 400;
  line-height: 12px;
  text-align: left;
  white-space: nowrap;
}
.props th {
  padding-left: 6px;
  border: 0;
}
.props td:last-child {
  border: 0;
}
.props td[colspan] {
  padding-left: 2px;
}
.group {
  background: #222933;
}
.props .group th {
  padding-left: 2px;
}
.props td svg {
  display: block;
  width: 12px;
  height: 12px;
  margin-left: -6px;
}
.props input {
  display: block;
  width: 100%;
  height: 12px;
}
.tick {
  display: block;
  width: 6px;
  height: 10px;
  border: 1px solid #6b7482;
}
.wide {
  display: block;
  width: 100%;
  height: 10px;
  border: 1px solid #8d95a1;
  line-height: 8px;
}
.off {
  color: #868e9a;
}
.props-foot {
  display: flex;
  align-items: center;
  gap: 3px;
  height: 16px;
  margin-top: auto;
  padding: 0 3px 0 2px;
  background: #343c49;
}
.props-foot button {
  display: flex;
  align-items: center;
  justify-content: center;
  width: 14px;
  height: 13px;
}
.props-foot .on {
  background: #2479a4;
}
.props-foot .apply {
  width: 46px;
  margin-left: auto;
  border: 1px solid #4a5363;
  color: #868e9a;
}

/* status bar */
.status {
  display: flex;
  align-items: center;
  gap: 5px;
  height: 17px;
  padding-right: 49px;
  border-top: 1px solid #2b323d;
  background: #3b4453;
  color: #8d95a1;
}
.ready {
  width: 590px;
  padding-left: 1px;
  color: #e6e8ea;
}
.globe {
  margin-right: 126px;
}
.zero {
  width: 20px;
  margin-left: -5px;
}
.model {
  width: 121px;
}
.picks {
  display: flex;
  align-items: center;
  gap: 5px;
  margin-left: auto;
  color: #e6e8ea;
}
.picks span {
  margin-left: -5px;
}

/* legend drawing */
#drawing .ln { stroke: #111; stroke-width: 1; fill: none; }
#drawing .thin { stroke: #333; stroke-width: .5; fill: none; }
#drawing .box { stroke: #111; stroke-width: 1; }
#drawing .slab { stroke: #a0226e; stroke-width: 1; fill: none; }
#drawing .red { fill: #d22; }
#drawing .redln { stroke: #d22; stroke-width: .6; fill: none; }
#drawing .b { font-weight: 700; }
#drawing .u { text-decoration: underline; }
#drawing .mid { text-anchor: middle; }
```

FILE: script.js
```js
// ---- project browser ----
// [guides, marker, text, flag]   marker: - + open/closed, p page, b blue page
const rows = [
  [0, '-', 'Views (all)', 'views'],
  [1, '+', 'Structural Plans'],
  [1, '+', '3D Views'],
  [1, '+', 'Elevations (Building Elevation)', 'sel'],
  [0, '-', 'Legends', 'legend'],
  [2, 'p', '0-Quy tắc bắt đầu với BIMSpeed'],
  [2, 'p', '2-Bảng hdsd Family & Dim & Tag-V1', 'bold'],
  [2, 'p', '3-Bảng hdsd Family & Dim & Tag-V2'],
  [0, '-', 'Schedules/Quantities (all)', 'sched'],
  [2, 'p', '1.BS-DANH MỤC BẢN VẼ'],
  [2, 'p', '2.BS-BẢNG THỐNG KÊ CỌC'],
  [2, 'p', '3.BS-BẢNG ĐỊNH VỊ TỌA ĐỘ CỌC'],
  [2, 'p', '4.BS-THỐNG KÊ CỘT'],
  [2, 'p', '5.BS-THỐNG KÊ DẦM MÓNG'],
  [2, 'p', '6.BS-THỐNG KÊ SÀN'],
  [2, 'p', '7.BS-THỐNG KÊ MÓNG'],
  [2, 'p', '8.BS-THỐNG KÊ DẦM'],
  [2, 'p', '9.BS-THỐNG KÊ THÉP CỘT'],
  [2, 'b', '10.BS-THỐNG KÊ THÉP - TYPE 1'],
  [2, 'b', '10a.BS-THỐNG KÊ THÉP - TYPE 2'],
  [2, 'p', '10a.BS-THỐNG KÊ THÉP - TYPE 2 Copy 1'],
  [2, 'b', '10B.BS-TỔNG HỢP THÉP'],
  [2, 'p', '11.BS-THỐNG KÊ THÉP MÓNG'],
  [2, 'p', '12.BS-THỐNG KÊ THÉP SÀN'],
  [2, 'p', '13.BS-THỐNG KÊ THÉP VÁCH'],
  [0, '-', 'Sheets (BS-Sheet)', 'sheet'],
  [1, '-', 'A.PHẦN CHUNG'],
  [2, '-', 'BÌA & 3D'],
  [4, '', 'KC-00-01 - TỜ BÌA'],
  [4, '', 'KC-00-02 - DANH MỤC BẢN VẼ'],
  [4, '', 'KC-00-03 - PHỐI CẢNH TỔNG THỂ'],
  [2, '-', 'GHI CHÚ'],
  [4, '', 'KC-00-04 - GHI CHÚ CHUNG - TỜ 1'],
  [4, '', 'KC-00-05 - GHI CHÚ CHUNG - TỜ 2'],
  [1, '+', 'B.PHẦN NGẦM'],
  [1, '+', 'C.PHẦN THÂN'],
  [1, '-', 'D.THỐNG KÊ'],
  [2, '+', '1.BÊ TÔNG']
];

function esc(s) {
  return s.replace(/&/g, '&amp;').replace(/</g, '&lt;');
}

document.getElementById('tree').innerHTML = rows.map(([depth, mark, text, flag]) => {
  let html = '';
  for (let i = 0; i < depth; i++) {
    const last = i === depth - 1 && (mark === 'p' || mark === 'b' || mark === '');
    html += `<i class="guide${last ? ' end' : ''}"></i>`;
  }
  if (mark === '-' || mark === '+') html += `<span class="toggle">${mark === '-' ? '–' : '+'}</span>`;
  if (mark === 'p') html += '<i class="page"></i>';
  if (mark === 'b') html += '<i class="page blue"></i>';
  if (['views', 'legend', 'sched', 'sheet'].includes(flag)) html += `<svg><use href="#p-${flag}"/></svg>`;
  const cls = flag === 'sel' || flag === 'bold' ? ` class="${flag}"` : '';
  return `<li${cls}>${html}<span>${esc(text)}</span></li>`;
}).join('');

// ---- legend sheet ----
let out = '';
const line = (x1, y1, x2, y2, c = 'ln') => { out += `<path class="${c}" d="M${x1} ${y1}L${x2} ${y2}"/>`; };
const path = (d, c = 'ln') => { out += `<path class="${c}" d="${d}"/>`; };
const rect = (x, y, w, h, fill = 'none', c = 'box') => { out += `<rect class="${c}" x="${x}" y="${y}" width="${w}" height="${h}" fill="${fill}"/>`; };
const circ = (x, y, r, c = 'thin') => { out += `<circle class="${c}" cx="${x}" cy="${y}" r="${r}"/>`; };
const text = (x, y, s, size, c = '') => { out += `<text x="${x}" y="${y}" font-size="${size}" class="${c}">${esc(s)}</text>`; };
const lines = (x, y, arr, size = 3, step = 3, c = '') => arr.forEach((s, i) => text(x, y + i * step, s, size, c));
const hl = (x1, x2, ys) => ys.forEach(y => line(x1, y, x2, y));
const vl = (y1, y2, xs) => xs.forEach(x => line(x, y1, x, y2));

// other symbols
rect(308.5, 166.5, 178, 426.5);
for (let i = 1; i < 24; i++) {
  const y = 166.5 + i * 17.77;
  line(308.5, y, 486.5, y);
}
vl(184.5, 593, [397.5]);
vl(184.5, 326.5, [344.5]);
vl(202.5, 309, [442.5]);
text(397.5, 179, 'KÝ HIỆU KHÁC / THE OTHER SYMBOL', 9, 'b mid');
text(442, 193, 'KÝ HIỆU HATCH SÀN TRÊN MBKC,', 5, 'mid');
text(442, 199, 'MB BỐ TRÍ THÉP SÀN', 5, 'mid');

const slabs = [
  'M315 192h7l2 2h7M316 194l2-2M319 194l2-2M324 196l2-2M328 196l2-2',
  'M315 209h6l3 3h5l2 3h8M316 211l2-2M324 214l2-2M328 214l2-2M333 217l2-2',
  'M314 230h5l2-3h5l2 3h1M315 232l2-2M321 229l2-2M325 229l2-2',
  'M315 244h6v4h6v-4h7M321 248h6M316 246l2-2M329 246l2-2M323 250l2-2',
  'M315 261l4 4h5l5-4M315 263l3 0M320 267l2-2M325 266l2-2',
  'M316 279h5l3 4h4M317 281l2-2M323 285l2-2M326 285l2-2',
  'M313 299l6-1h5l5 4M314 301l2-2M318 300l2-2M323 301l2-2',
  'M314 315l5 1 3 3h7M316 317l2-1M320 320l2-2M325 321l2-2'
];
slabs.forEach(d => path(d, 'slab'));
const slabNotes = [
  ['1.SÀN MÊ VÊ, CỐT NỀN DÂNG KÍNH'],
  ['1.SÀN GIẬT CẤP, CỐT ĐỘ LIỆN GIẬT CẤP', 'SÀN XEM TRONG BẢN VẼ'],
  ['KÝ HIỆU BO SÀN, CÓ ĐỘ CAO BO SÀN', 'ĐƯỢC XEM TRONG BẢN VẼ'],
  ['KÝ HIỆU RÃNH SÀN, CỐT ĐỘ CAO RÃNH', 'ĐƯỢC XEM TRONG BẢN VẼ'],
  ['KÝ HIỆU SÀN DỐC, ĐƯỜNG DỐC GHI BẢN', 'SÀN, ĐỘ DỐC ĐƯỢC GHI TRONG', 'TRONG BẢN VẼ'],
  ['KÝ HIỆU SÀN DỐC ĐƯỜNG CÓ MÁI'],
  ['KÝ HIỆU SÀN DỐC ĐƯỜNG KHÔNG CÓ MÁI'],
  ['KÝ HIỆU SÀN DỐC LỚN']
];
slabNotes.forEach((n, i) => lines(348, 193.5 + i * 17.77 - (n.length - 1) * 1.2, n, 2.2, 2.6));

const fills = ['#fff', '#f1f0fa', '#fafaff', '#e6e4fa', '#fafafd', '#f7f7f7', '#fafafd', '#f5f5f5', '#f1f0fa', '#f5f5f5', '#f5f5fb', '#fff'];
for (let i = 0; i < 6; i++) {
  const y = 207 + i * 17.77;
  rect(399, y, 17, 9, fills[i * 2]);
  rect(443.5, y, 17, 9, fills[i * 2 + 1]);
  lines(419, y + 1.5, ['HATCH-SÀN, DÀY ' + i, 'Solid Model: ' + (i + 1), 'Section Only'], 2.4, 3);
  if (i < 5) lines(463, y + 1.5, ['HATCH-SÀN, SÀN ' + (i + 6), 'Solid Model: ' + i, 'Section Only'], 2.4, 3);
}
path('M443.5 242.500l8.500 9 8.500-9M443.500 251.500l8.500-9 8.500 9', 'thin');
path('M443.5 295.800l17 9M460.500 295.800l-17 9');
text(463, 298, 'HÀ CỐT RỖNG', 2.4);
text(400, 313, 'GHI CHÚ:', 4, 'u');
lines(400, 317, ['- Trên đây là ký hiệu Hatch cho Mặt bằng kết cấu và các bản vẽ thép liên quan, mỗi', 'hatch sàn', '- Xem Chi Tiết ở bản vẽ', '- Quy ước cốt sàn trong bảng ký hiệu lấy theo mặt bằng kết cấu, xem thêm'], 2.3, 2.8);

// text types
rect(508.5, 166.5, 226, 293);
rect(734.5, 166.5, 151.5, 424.8);
hl(508.5, 886, [184.5, 342, 360]);
hl(508.5, 734.5, [193.5, 202.5, 211.5, 220.5, 293.5, 459.5, 477.5]);
vl(184.5, 220.5, [603.5, 639.5]);
vl(293.5, 342, [621.5]);
text(621.5, 179, 'CÁC LOẠI TEXT DÙNG TRONG FILE', 9, 'mid');
text(554, 191, 'TEXT STYLE', 4, 'mid');
text(621.5, 191, 'MÃ MÀU', 4, 'mid');
text(687, 191, 'GHI CHÚ', 4, 'mid');
text(510, 198.5, '00 TEXT STYLE DÙNG CHO ĐƯỜNG NÉT PHỤ TRỢ', 2.5, 'red');
lines(641, 197.5, ['DÙNG CHO CÁC BẢN VẼ PHỤ TRỢ, KÝ HIỆU TRONG MẶT BẰNG, CHIỀU RỘNG,', 'CAO ĐỘ: 0.8'], 2.5, 3, 'red');
text(510, 208, '01 TEXT STYLE DÙNG CHO GHI CHÚ BẢN VẼ CÓ CỠ CHỮ', 2.5);
text(621.5, 198.5, '000-000-255', 2.5, 'mid');
text(621.5, 208, 'BLACK', 2.5, 'mid');
text(621.5, 217, '000-000-255', 2.5, 'mid');
text(641, 208, 'DÙNG GHI CHÚ, CỠ CHỮ CHIỀU RỘNG: 0.8', 2.5);
lines(510, 215.5, ['02 TEXT STYLE DÙNG CHO GHI CHÚ CHUNG, TÊN BẢN VẼ', 'VÀ CÁC KÝ HIỆU TRÊN MẶT BẰNG KẾT CẤU'], 2.5, 3);
text(641, 217, 'DÙNG MỤC TEXT TRONG BẢN VẼ, KHUNG TÊN HOẶC CHIỀU RỘNG: 0.8', 2.5);

text(513, 226, 'CHÚ THÍCH:', 4, 'u');
lines(513, 231, [
  '- VÌ TRONG BẢN VẼ CÓ NHIỀU TEXT DÙNG CHO CÁC MỤC ĐÍCH KHÁC NHAU, VIỆC ĐẶT TÊN TEXT GIÚP NGƯỜI DÙNG DỄ QUẢN LÝ, DỄ SỬA ĐỔI VÀ THỐNG NHẤT TRONG TOÀN BỘ DỰ ÁN.',
  'KHI CHỌN TEXT PHẢI XEM TÊN TEXT, CHIỀU CAO CHỮ VÀ TỶ LỆ BẢN VẼ CHO PHÙ HỢP VỚI TỪNG LOẠI BẢN VẼ, KHÔNG TỰ Ý TẠO THÊM CÁC LOẠI TEXT KHÁC NGOÀI BẢNG NÀY',
  'MÀU CỦA TEXT ĐƯỢC QUY ĐỊNH THEO NÉT IN, MỖI LOẠI TEXT CÓ MỘT MÀU RIÊNG ĐỂ DỄ NHẬN BIẾT.',
  '- CÁC LOẠI TEXT ĐƯỢC PHÂN BIỆT THEO CHIỀU CAO, KIỂU CHỮ, BỀ RỘNG VÀ MÀU SẮC. KHI CẦN THÊM LOẠI TEXT MỚI PHẢI ĐẶT TÊN THEO ĐÚNG CÚ PHÁP DƯỚI ĐÂY ĐỂ DỄ QUẢN LÝ',
  'BỀ RỘNG CHỮ MẶC ĐỊNH LÀ 0.8, CÓ THỂ THAY ĐỔI THEO YÊU CẦU CỦA DỰ ÁN.',
  '- CHIỀU CAO TEXT ĐƯỢC TÍNH THEO ĐƠN VỊ MM KHI IN RA GIẤY, KHÔNG PHỤ THUỘC VÀO TỶ LỆ CỦA BẢN VẼ',
  '- CÚ PHÁP ĐẶT TÊN:'
], 2.1, 3);
text(541, 253, '@BS-TEXT "TEXT STYLE" "CHIỀU CAO"-## "CHIỀU RỘNG"', 4, 'b');
lines(514, 259, ['VÍ DỤ:', '@BSTEXT_DIMENSION_1MM 0.8', '     @BSTEXT_VERDANA_2MM 0.8', '     @BSTEXT_ARIAL_2MM 0.8'], 2.6, 3);
text(604, 269, 'TEXT HEIGHT:', 4, 'u');
[[604, 'A. CHIỀU CAO CHỮ TRONG'], [642, 'B. CHIỀU CAO CHỮ TRONG'], [697, 'C. CHIỀU CAO CHỮ TRONG']].forEach(([x, s]) =>
  lines(x, 274, [s, 'CÁC GHI CHÚ, MẶT BẰNG', 'GỒM:', '- H2: 2.0mm', '- H3: 2.5mm', '- H4: 3.0mm', '- H5: 3.5mm'], 2.4, 3));

text(513, 299, 'KÝ HIỆU VIẾT TẮT TRONG BẢN VẼ', 4, 'u');
['-BS: Cốt sàn hoàn thiện', '-MC: Tên mặt cắt kết cấu', '-D: Dầm bê tông cốt thép', '-C: Cột bê tông cốt thép', '-TD: Thép dọc của dầm', '-BT: Bê tông lót đáy móng'].forEach((s, i) => {
  text(512, 304 + i * 3, s + ', xem chi tiết kết cấu', 2.6);
  text(571, 304 + i * 3, s + ', xem mặt bằng', 2.6);
});
text(513, 325, 'QUY ƯỚC KHI PHỐI HỢP NHIỀU BỘ MÔN', 4, 'u');
lines(513, 330, ['- MEP và KIẾN TRÚC: 100', '- Bản vẽ kết cấu lấy theo cốt kiến trúc, khi có sai khác phải báo lại', '- Các lỗ mở kỹ thuật phải được thống nhất trước khi triển khai bản vẽ thi công', 'và được ghi rõ trong bản vẽ phối hợp giữa các bộ môn'], 2.6, 3);
text(626, 299, 'QUY ƯỚC VỀ HATCH DÙNG TRONG BẢN VẼ', 4, 'u');
lines(625, 304, [
  '- Dưới đây là quy ước về hatch trong bản vẽ, hatch vật liệu thể hiện vật liệu cấu kiện,',
  'thị dùng để phân biệt.',
  '1.Hatch vật liệu: Dùng thể hiện vật liệu của cấu kiện bị cắt qua trong mặt cắt. Các loại',
  'được gán trong vật liệu của cấu kiện.',
  '2.Hatch trên mặt bằng: Thể hiện theo sàn, độ dày, cao độ hoặc khu vực của mặt bằng',
  'để người đọc bản vẽ dễ dàng nhận biết, mỗi loại hatch có một ý nghĩa riêng được ghi',
  'ký hiệu. Khi thay đổi hatch phải thay đổi đồng bộ trong toàn bộ bản vẽ của dự án.',
  '- Các quy ước về hatch được áp dụng cho tất cả bản vẽ kết cấu trong dự án, kể cả thép',
  'và bản vẽ chi tiết cấu tạo.',
  '3.Hatch hiển thị: Dùng thể hiện cấu kiện trong mặt đứng và phối cảnh. Khi dùng phải',
  'bảng màu và nét hatch đã quy định, không tự ý thay đổi kiểu hatch trong bản vẽ.'
], 2.6, 3.4);

// dimension types
vl(184.5, 317.5, [783.5]);
hl(734.5, 886, [229, 273.3, 317.5]);
text(810, 179, 'CÁC LOẠI DIM DÙNG TRONG FILE', 9, 'mid');
['DIM A3', 'DIM A2', 'DIM A1'].forEach((s, i) => {
  const y = 184.5 + i * 44.3;
  text(758, y + 25, s, 8, 'mid');
  path(`M802.500 ${y + 8}h18v18h-18zM811.500 ${y + 8}v18`);
  path(`M825 ${y + 8}v18M823 ${y + 8}h4M823 ${y + 26}h4M802 ${y + 30}h19M802 ${y + 35}h19M802.500 ${y + 28}v8M820.500 ${y + 28}v8M811.500 ${y + 28}v4`, 'thin');
  const cx = 849, cy = y + 18, r = 13;
  let d = '', k = '';
  for (let a = 0; a < 9; a++) {
    const t = a * Math.PI * 2 / 9 + 0.3;
    const px = (cx + r * Math.cos(t)).toFixed(1), py = (cy + r * Math.sin(t)).toFixed(1);
    d += (a ? 'L' : 'M') + px + ' ' + py;
    k += `M${cx} ${cy}L${px} ${py}`;
  }
  path(d + 'z');
  path(k, 'thin');
  circ(cx, cy, r);
  circ(cx, cy, 1.5, 'ln');
  path(`M840 ${y + 37}l22-4M840 ${y + 35}l1 4M851 ${y + 33}l1 4M862 ${y + 31}l1 4`, 'thin');
});

// hatch types
text(621, 355, 'CÁC LOẠI HATCH DÙNG TRONG FILE', 9, 'mid');
vl(360, 459.5, [565.5, 621.5, 677.5]);
line(565.5, 406.5, 621.5, 406.5);
['HATCH VẬT LIỆU', 'HATCH VẬT LIỆU', 'HATCH HIỂN THỊ', 'HATCH HIỂN THỊ'].forEach((s, c) => text(513 + c * 56.4, 365, s, 4, 'u'));
const hatch = [
  ['#fbe6d0', '#fff', '#fdf5f0', '#fbe8da', '#fdf0dc', '#f8f8e8', '#fbf3e4'],
  ['#fdf0e2', '#fbdcc0', '#fde8d4', '#fae6da', '#f0fbf0', '#fdf4f4'],
  ['#fff', '#fafafa', '#f5f5f5', '#f0f0f0', '#ececfa', '#ededed', '#f5f5f5'],
  ['#f2f2f2', '#e8e8e8', '#f5f5f5', '#ebebeb', '#ebebeb', '#ededed', '#e8e8e8']
];
const names = ['BTCT', 'BÊ TÔNG', 'GẠCH THẺ', 'ĐẤT NỀN', 'CÁT LÓT', 'THÉP', 'NHÔM'];
hatch.forEach((col, c) => col.forEach((f, i) => {
  const x = 514 + c * 56.4, y = 369 + i * 13.3;
  rect(x, y, 18, 9, f);
  lines(x + 21, y, c < 2 ? ['HATCH-VL-' + names[i], '- Pattern: Solid 0.2', '- Màu nền: Solid', '- RGB: 255-230-200'] : ['HATCH-' + names[i], 'Drafting Pattern 0.5', 'Section Only'], 2.4, c < 2 ? 3 : 3.6);
}));
path('M572 438.500h5M581 438.500h5', 'redln');
circ(579, 438.5, 2, 'redln');
path('M683 396l9 9 9-9M683 405l9-9 9 9M514 445l9-9M522 445l9-9M514 458l9-9', 'thin');

// 3d rebar tags
text(621, 472.5, 'GHI NHÃN THÉP 3D', 9, 'mid');
vl(477.5, 633, [508.5, 517.5, 526.5, 535.5, 544.5, 566.5, 588.5]);
vl(477.5, 591.3, [621.5]);
vl(477.5, 570, [630.5, 639.5, 648.5, 657.5, 680, 701.5]);
vl(459.5, 591.3, [734.5]);
hl(508.5, 734.5, [484.5, 591.3]);
hl(508.5, 588.5, [633]);
hl(508.5, 621.5, [506, 548.5]);
hl(621.5, 734.5, [570, 527.2]);
['CẤU KIỆN', 'KÍCH', 'VỊ TRÍ', 'TỶ LỆ'].forEach((s, i) => {
  text(513 + i * 9, 482, s, 2, 'mid');
  text(626 + i * 9, 482, s, 2, 'mid');
});
text(555.5, 482, 'FAMILY', 2.4, 'mid');
text(605, 482, 'GHI CHÚ', 2.4, 'mid');
text(679, 482, 'FAMILY', 2.4, 'mid');
text(718, 482, 'GHI CHÚ', 2.4, 'mid');
for (let i = 0; i < 21; i++) {
  const y = 484.5 + i * 7.08;
  if (i < 3 || i % 2 === 1) line(517.5, y, 588.5, y);
  else line(535.5, y, 566.5, y);
  text(540, y + 4.5, i % 2 ? 'Phải' : 'Trái', 2.4, 'mid');
  if (i < 3 || i % 2) {
    text(522, y + 5, 'A' + (1 + i % 3), 2.4, 'mid');
    text(531, y + 5, 'Dưới', 2.4, 'mid');
    lines(567.5, y + 2.5, i < 3 ? ['Text Height: 2.0mm', 'Radius Circle: 2.0'] : ['Text Height: 2.0mm', 'Radius Circle: 2.5', 'Leader Length: 10'], 2.3, 2.8);
  }
  const right = i < 3 || i % 2;
  const cx = right ? 562 : 551;
  circ(cx, y + 3.5, 2, 'thin');
  circ(cx, y + 3.5, 2.4, 'redln');
  if (i < 3) text(546, y + 4.5, '@BS100 STT', 2.6);
  else path(`M551 ${y + 3.5}H562`, 'ln');
}
for (let i = 0; i < 12; i++) {
  const y = 484.5 + i * 7.12;
  line(i % 2 ? 648.5 : 630.5, y, 701.5, y);
  text(653, y + 4.5, i % 2 ? 'Trái' : 'Phải', 2.4, 'mid');
  if (i % 2 === 0) {
    text(635, y + 8, 'A' + (1 + i / 2), 2.4, 'mid');
    text(644, y + 8, 'Dưới', 2.4, 'mid');
  }
  const a = i % 2 ? 661 : 675, b = i % 2 ? 686 : 694;
  circ(a, y + 3.5, 2.2, 'redln');
  circ(b, y + 3.5, 2.2, 'redln');
  text(i % 2 ? 663 : 659, y + 4.5, '@BS100STT', 2.5);
  text(i % 2 ? 687 : 683, y + 4.5, '@BS100', 2.5);
}
const note = ['- Dùng để ghi thép dầm,', 'cột, vách trong các bản', 'vẽ mặt cắt, chi tiết của', 'cấu kiện bê tông', '"Thép dầm chính"', '- Khi ghi nhãn dùng một', 'loại family cho một bản'];
lines(590, 488, note.slice(0, 6), 2.6, 2.9);
lines(590, 509, note.concat(note.slice(0, 2)), 2.6, 2.9);
lines(590, 552, note.slice(0, 5), 2.6, 2.9);
lines(590, 567, ['"Level Full Rebar', 'Dimension"'], 2.6, 2.9, 'b');
lines(590, 573, note.slice(5), 2.6, 2.9);
lines(703, 488, note.concat(note.slice(0, 5)), 2.6, 3);
lines(703, 531, note.concat(note.slice(0, 5)), 2.6, 3);
text(703, 525, '"Tag bs bs/Mem:"', 2.8, 'b u');
[490, 520, 565, 605].forEach(y => lines(510, y, ['Ghi', 'nhãn', 'thép', 'cho', 'dầm'], 2.3, 2.8));
[505, 545].forEach(y => lines(623, y, ['Ghi', 'nhãn', 'thép', 'sàn'], 2.3, 2.8));
lines(623, 574, [
  '- Khi dùng các loại nhãn trong bản vẽ thép phải dùng theo đúng hướng dẫn trên',
  '- Các loại nhãn thép dầm sàn được đặt tên theo cú pháp chung, mỗi loại nhãn dùng',
  'loại bản vẽ và một tỷ lệ.',
  '- Chiều cao chữ trong nhãn lấy theo tỷ lệ của bản vẽ, khi đổi tỷ lệ phải đổi loại nhãn',
  'với bản vẽ, tránh trường hợp chữ quá to hoặc quá nhỏ so với khung bản vẽ đang',
  'kể cả các bản vẽ chi tiết.'
], 2.6, 3);

// symbols
text(807, 355, 'KÝ HIỆU DÙNG TRONG FILE', 9, 'mid');
vl(360, 591.3, [808.5]);
vl(374.5, 591.3, [783.5, 857.5]);
hl(734.5, 886, [374.5, 392, 409.7, 427.5, 445, 463.3, 480.7, 498.3, 534, 551.7, 569.3]);
text(769, 369, 'A1~A2', 8, 'mid');
text(843, 369, 'A3~A4', 8, 'mid');
const info = ['FAMILY: KÝ HIỆU', 'TEXT HEIGHT: 2.0', 'MARK LENGTH: 5', 'SCALE: 1:100 (A1)', 'RADIUS CIRCLE: 3', 'DASH LENGTH: 2'];
[374.5, 392, 409.7, 427.5, 445, 463.3, 480.7, 498.3, 534, 551.7, 569.3].forEach((y, i) => {
  const n = i < 2 ? 3 : i === 7 ? 12 : i > 4 ? 6 : 5;
  for (let k = 0; k < n; k++) {
    text(784.5, y + 2.8 + k * 2.9, info[k % 6], 2.4);
    text(858.5, y + 2.8 + k * 2.9, info[k % 6], 2.4);
  }
});
[0, 1].forEach(n => {
  const x = n * 74.5;
  circ(758.5 + x, 383, n ? 3 : 4);
  path(`M${752 + x} 383h13M${758.5 + x} 377v12`, 'thin');
  path(`M${754 + x} 397v8M${754 + x} 401h14M${752 + x} 403l2 3 2-3`);
  text(757 + x, 400, 'FFL-1.5', 3, 'red');
  path(`M${756 + x} 402.500h8`, 'redln');
  text((n ? 818 : 740), 418, 'MC: 18-18', n ? 4 : 5, 'u');
  text((n ? 818 : 740), 425, 'TL 1:25', n ? 4 : 5, 'red');
  text((n ? 812 : 732), 439, 'View Scale', 4);
  text((n ? 830 : 754), 435, 'View Name', n ? 4 : 5, n ? 'u' : 'b u');
  text((n ? 830 : 754), 442, 'Tên View (EN)', 4);
  text((n ? 824 : 746), 454, 'View Name', n ? 4 : 5, n ? 'u' : 'b u');
  text((n ? 824 : 746), 460, 'TL 1:25', n ? 4 : 5, 'red');
  text(737 + x, 468, '+0.000', 3, 'red');
  text(737 + x, 475, '-0.050', 3, 'red');
  path(`M${740 + x} 477h4l-2 2zM${752 + x} 469h4l-2 2zM${768 + x} 475l2-2 2 2-2 2zM${772 + x} 475h10`);
  circ(758.5 + x, 489, 4.5);
  path(`M${754 + x} 489h9`, 'thin');
  text(756 + x, 488, 'A1', 2.8, 'red');
  text(765 + x, 486, '42', 2.8, 'red');
  path(`M${737 + x} 507h4l-2-2z`);
  circ(752 + x, 505, 4);
  circ(771 + x, 505, 4);
  path(`M${765 + x} 505l6-6 6 6M${735 + x} 523l6-6 6 6`);
  circ(741 + x, 524, 4.5, 'ln');
  path(`M${765 + x} 505l6 6 6-6M${735 + x} 524l6 6 6-6M${766 + x} 505h10M${736 + x} 524h10M${748 + x} 505h8`, 'thin');
  ['A1', 'A2', 'A1'].forEach((s, i) => text([750, 769, 739][i] + x, [504, 504, 523][i], s, 2.8, 'red'));
  ['42', '42', '42'].forEach((s, i) => text([757, 776, 746][i] + x, [502, 502, 520][i], s, 2.8, 'red'));
  [738, 751, 770].forEach(v => text(v + x, 514, '2.5', 2.4));
  text(738 + x, 539, 'C2', 3, 'red');
  text(756 + x, 537, 'C1', 3, 'red');
  text(750 + x, 542, 'TypeName', n ? 3 : 4, 'red');
  text(738 + x, 560, 'D1', 3, 'red');
  text(747 + x, 560, 'D1-TypeName', 3, 'red');
  text(772 + x, 557, 'D1', 3, 'red');
  text(766 + x, 563, '(TypeName)', 3, 'red');
  text(742 + x, 578, 'TypeMark', 3, 'red');
  text(763 + x, 578, 'Mark', 3, 'red');
  [548, 566, 584].forEach(y => { text(739 + x, y, '2.0', 2.4); text(757 + x, y, '2.5', 2.4); });
});

document.getElementById('drawing').innerHTML = out;
```
